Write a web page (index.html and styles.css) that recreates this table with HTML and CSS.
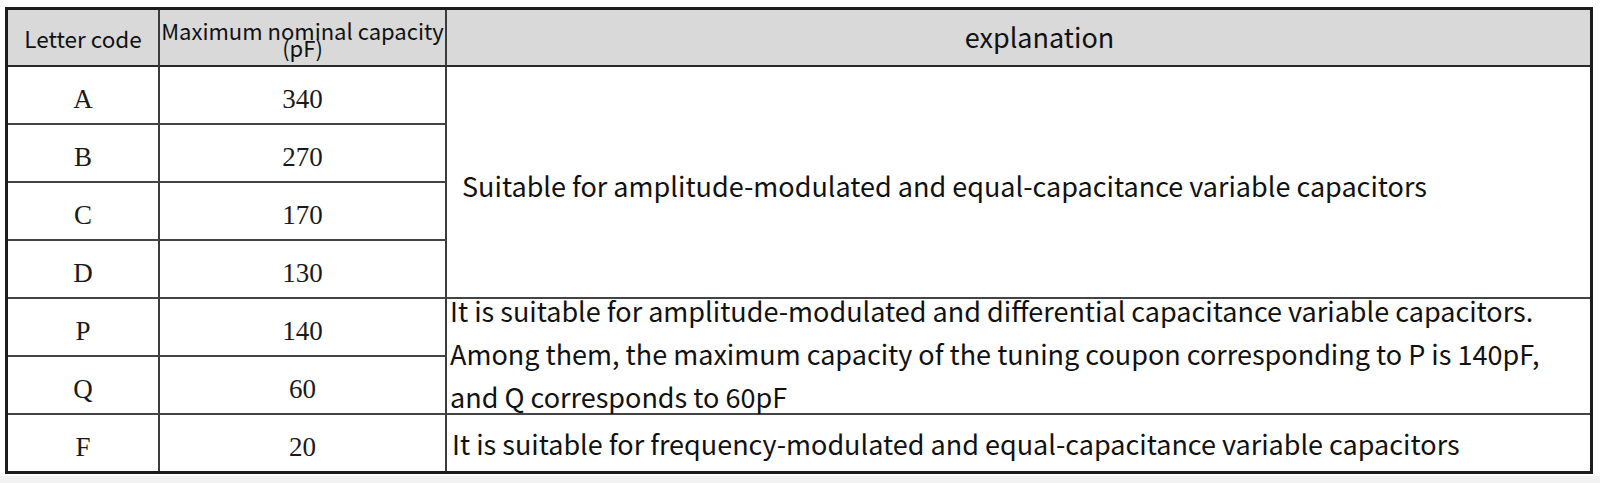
FILE: index.html
```html
<!DOCTYPE html>
<html lang="en">
<head>
<meta charset="utf-8">
<title>Variable capacitor letter codes</title>
<link rel="stylesheet" href="styles.css">
</head>
<body>
<div class="page">
  <div class="table">
    <div class="cell head h-code">Letter code</div>
    <div class="cell head h-cap"><span>Maximum nominal capacity</span><span>(pF)</span></div>
    <div class="cell head h-expl last-col">explanation</div>

    <div class="cell code">A</div>
    <div class="cell num">340</div>
    <div class="cell expl expl-am last-col">Suitable for amplitude-modulated and equal-capacitance variable capacitors</div>

    <div class="cell code">B</div>
    <div class="cell num">270</div>

    <div class="cell code">C</div>
    <div class="cell num">170</div>

    <div class="cell code">D</div>
    <div class="cell num">130</div>

    <div class="cell code">P</div>
    <div class="cell num">140</div>
    <div class="cell expl expl-pq last-col">It is suitable for amplitude-modulated and differential capacitance variable capacitors.<br>Among them, the maximum capacity of the tuning coupon corresponding to P is 140pF,<br>and Q corresponds to 60pF</div>

    <div class="cell code">Q</div>
    <div class="cell num">60</div>

    <div class="cell code last-row">F</div>
    <div class="cell num last-row">20</div>
    <div class="cell expl expl-f last-col last-row">It is suitable for frequency-modulated and equal-capacitance variable capacitors</div>
  </div>
  <div class="footer-strip"></div>
</div>
</body>
</html>
```

FILE: styles.css
```css
html, body {
  margin: 0;
  padding: 0;
  background: #ffffff;
}

.page {
  width: 1600px;
  height: 483px;
  padding-top: 7px;
  box-sizing: border-box;
  display: flex;
  flex-direction: column;
}

.table {
  margin-left: 5px;
  width: 1588px;
  box-sizing: border-box;
  border: 3px solid #1c1c1c;
  display: grid;
  grid-template-columns: 152px 287px 1fr;
  grid-template-rows: 57px repeat(6, 58px) 56px;
}

.cell {
  box-sizing: border-box;
  border-right: 2px solid #3c3c3c;
  border-bottom: 2px solid #444444;
  display: flex;
  align-items: center;
  justify-content: center;
  overflow: visible;
  white-space: nowrap;
}

.last-col { border-right: none; }
.last-row { border-bottom: none; }

.head {
  background: #d9d9d9;
  border-bottom: 2px solid #2a2a2a;
  font-family: "Noto Sans CJK SC", "Noto Sans", sans-serif;
  color: #111111;
}

.h-code {
  font-size: 22.5px;
}

.h-cap {
  flex-direction: column;
  font-size: 22px;
  line-height: 17px;
  padding-top: 3px;
}

.h-expl {
  font-size: 27px;
  padding-left: 42px;
  padding-bottom: 2px;
}

.code, .num {
  font-family: "Liberation Serif", "Times New Roman", serif;
  font-size: 27px;
  color: #1a1a1a;
  padding-top: 8px;
}

.expl {
  grid-column: 3;
  justify-content: flex-start;
  font-family: "Noto Sans CJK SC", "Noto Sans", sans-serif;
  font-size: 27px;
  color: #111111;
}

.expl-am {
  grid-row: span 4;
  padding-left: 15px;
  padding-top: 6px;
}

.expl-pq {
  grid-row: span 2;
  padding-left: 3px;
  padding-bottom: 6px;
  line-height: 43px;
}

.expl-f {
  padding-left: 5px;
}

.footer-strip {
  margin-top: 2px;
  flex: 1;
  background: #f2f2f2;
}
```
